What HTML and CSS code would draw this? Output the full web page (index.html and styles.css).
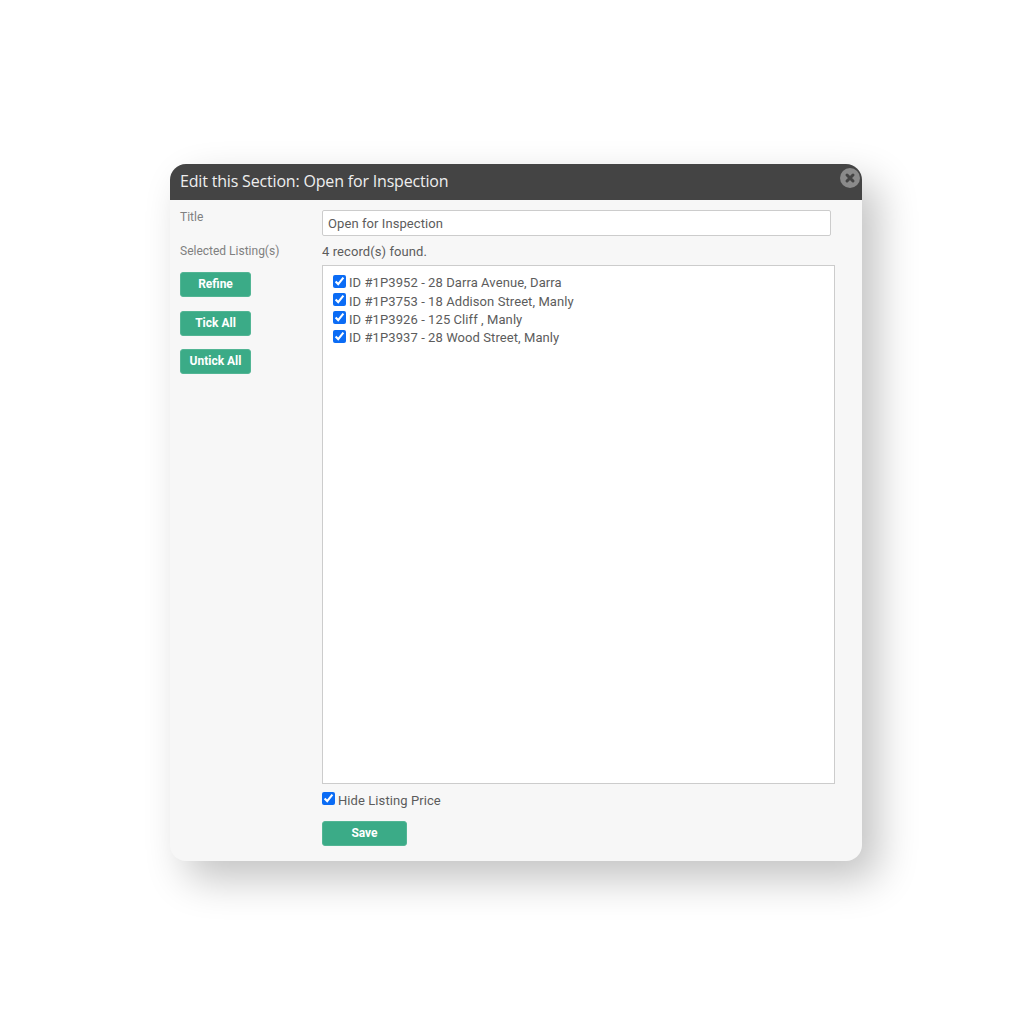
FILE: index.html
```html
<!DOCTYPE html>
<html lang="en">
<head>
    <meta charset="UTF-8">
    <meta name="viewport" content="width=device-width, initial-scale=1.0">
    <title>Edit this Section</title>
    <link rel="stylesheet" href="styles.css">
</head>
<body>
    <div class="dialog">
        <div class="dialog-header">
            Edit this Section: Open for Inspection
            <button class="close" aria-label="Close">
                <svg viewBox="0 0 20 20" width="20" height="20">
                    <circle cx="10" cy="10" r="10" fill="#8a8a8a"/>
                    <path d="M7 7l6 6M13 7l-6 6" stroke="#444" stroke-width="3" stroke-linecap="round"/>
                </svg>
            </button>
        </div>
        <div class="dialog-body">
            <div class="side">
                <label class="side-label title-label" for="title">Title</label>
                <div class="side-label listing-label">Selected Listing(s)</div>
                <button class="btn">Refine</button>
                <button class="btn">Tick All</button>
                <button class="btn">Untick All</button>
            </div>
            <div class="main">
                <input type="text" id="title" class="title-input" value="Open for Inspection">
                <p class="found">4 record(s) found.</p>
                <div class="listbox">
                    <label class="row"><input type="checkbox" checked>ID #1P3952 - 28 Darra Avenue, Darra</label>
                    <label class="row"><input type="checkbox" checked>ID #1P3753 - 18 Addison Street, Manly</label>
                    <label class="row"><input type="checkbox" checked>ID #1P3926 - 125 Cliff , Manly</label>
                    <label class="row"><input type="checkbox" checked>ID #1P3937 - 28 Wood Street, Manly</label>
                </div>
                <label class="hide-price"><input type="checkbox" checked>Hide Listing Price</label>
                <button class="btn save">Save</button>
            </div>
        </div>
    </div>
</body>
</html>
```

FILE: styles.css
```css
body {
    box-sizing: border-box;
    min-height: 1032px;
    margin: 0;
    padding: 164px 170px 0;
    background-color: #fff;
    font-family: Roboto, "Liberation Sans", sans-serif;
    color: #5c5c5c;
}

.dialog {
    height: 697px;
    background-color: #f7f7f7;
    border-radius: 16px;
    overflow: hidden;
    box-shadow: 16px 18px 40px rgba(0, 0, 0, 0.24);
}

.dialog-header {
    position: relative;
    height: 36px;
    padding-left: 10px;
    background-color: #444;
    color: #eee;
    font-family: "Open Sans", sans-serif;
    font-size: 16px;
    letter-spacing: -0.18px;
    line-height: 35px;
}

.close {
    position: absolute;
    top: 4px;
    right: 2px;
    width: 20px;
    height: 20px;
    padding: 0;
    border: 0;
    background: none;
}

.close svg {
    display: block;
}

.dialog-body {
    display: flex;
}

.side {
    display: flex;
    flex-direction: column;
    align-items: flex-start;
    width: 142px;
    padding-left: 10px;
}

.side-label {
    font-size: 12px;
    color: #808080;
}

.title-label {
    margin-top: 10px;
}

.listing-label {
    margin: 20px 0 14px;
}

.btn {
    width: 71px;
    height: 25px;
    margin-bottom: 13.500px;
    padding: 0 0 1px;
    border: 1px solid #52b594;
    border-radius: 3px;
    background-color: #3bab87;
    color: #fff;
    font-family: Roboto, sans-serif;
    font-size: 12px;
    font-weight: 700;
}

.main {
    flex: 1;
    padding-top: 10px;
}

.title-input {
    display: block;
    box-sizing: border-box;
    width: 509px;
    height: 26px;
    padding: 0 5px;
    border: 1px solid #ccc;
    border-radius: 2px;
    background: #fff;
    color: #5c5c5c;
    font-family: Roboto, sans-serif;
    font-size: 13px;
    letter-spacing: 0.08px;
}

.found {
    margin: 8px 0 6px;
    font-size: 13px;
    letter-spacing: 0.08px;
    line-height: 15px;
}

.listbox {
    box-sizing: border-box;
    width: 513px;
    height: 519px;
    padding: 7.600px 10px;
    border: 1px solid #ccc;
    background: #fff;
}

.row {
    display: flex;
    align-items: center;
    height: 18.300px;
    font-size: 13px;
    letter-spacing: 0.08px;
}

.row input,
.hide-price input {
    width: 13px;
    height: 13px;
    margin: 0 3px 3px 0;
    accent-color: #0b6cf5;
}

.hide-price {
    display: flex;
    align-items: center;
    height: 18px;
    margin: 7px 0 12px;
    font-size: 13px;
    letter-spacing: 0.08px;
}

.save {
    display: block;
    width: 85px;
    margin: 0;
}
```
